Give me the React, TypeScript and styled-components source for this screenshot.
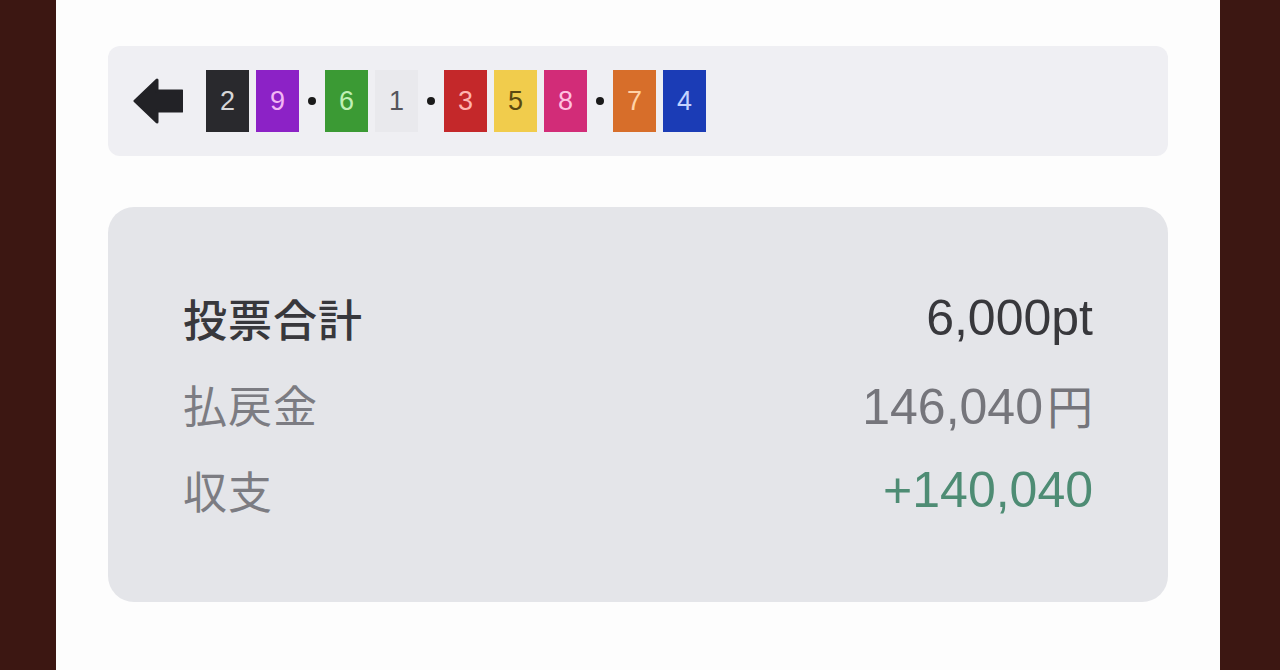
import React from "react";
import styled, { createGlobalStyle } from "styled-components";

const Global = createGlobalStyle`
  html, body { margin: 0; padding: 0; }
  body {
    background: #3c1712;
    font-family: "Liberation Sans", "Noto Sans CJK JP", sans-serif;
    overflow: hidden;
  }
`;

const Frame = styled.div`
  display: flex;
  width: 1280px;
  height: 670px;
  background: #3c1712;
`;

const Panel = styled.main`
  margin-left: 56px;
  width: 1164px;
  height: 670px;
  background: #fdfdfd;
  box-sizing: border-box;
  padding: 46px 52px 0;
  display: flex;
  flex-direction: column;
  overflow: hidden;
`;

const BetBar = styled.div`
  height: 110px;
  background: #efeff3;
  border-radius: 12px;
  display: flex;
  align-items: center;
  padding-left: 25px;
  box-sizing: border-box;
`;

const ArrowWrap = styled.div`
  width: 50px;
  height: 46px;
  margin-right: 23px;
  display: flex;
  align-items: center;
`;

const Numbers = styled.div`
  display: flex;
  align-items: center;
  gap: 7px;
`;

const Box = styled.div<{ $bg: string; $fg: string }>`
  width: 43px;
  height: 62px;
  background: ${(p) => p.$bg};
  color: ${(p) => p.$fg};
  display: flex;
  align-items: center;
  justify-content: center;
  font-family: "Liberation Sans", sans-serif;
  font-size: 27px;
  line-height: 1;
`;

const Dot = styled.span`
  width: 8px;
  height: 8px;
  margin: 0 2px;
  border-radius: 50%;
  background: #1a1a1a;
`;

const Card = styled.section`
  margin-top: 51px;
  height: 395px;
  background: #e4e5e9;
  border-radius: 26px;
  box-sizing: border-box;
  padding: 68px 75px;
  display: flex;
  flex-direction: column;
`;

const Row = styled.div`
  height: 86px;
  display: flex;
  align-items: center;
  justify-content: space-between;
`;

const Label = styled.span<{ $strong?: boolean }>`
  font-family: "Noto Sans CJK JP", sans-serif;
  font-size: 44px;
  font-weight: ${(p) => (p.$strong ? 500 : 400)};
  color: ${(p) => (p.$strong ? "#38383c" : "#7c7c82")};
  letter-spacing: 1px;
`;

const Value = styled.span<{ $color: string }>`
  font-family: "Liberation Sans", "Noto Sans CJK JP", sans-serif;
  font-size: 50px;
  color: ${(p) => p.$color};
`;

const Yen = styled.span`
  font-family: "Noto Sans CJK JP", sans-serif;
  font-size: 46px;
  margin-left: 4px;
`;

type Item = { n: string; bg: string; fg: string } | "dot";

const items: Item[] = [
  { n: "2", bg: "#29292d", fg: "#d6d6d8" },
  { n: "9", bg: "#8c22c6", fg: "#f2b6f4" },
  "dot",
  { n: "6", bg: "#3b9a34", fg: "#bff0b6" },
  { n: "1", bg: "#e9e9ed", fg: "#55555c" },
  "dot",
  { n: "3", bg: "#c4282a", fg: "#ffb4b0" },
  { n: "5", bg: "#f1cc4c", fg: "#5a4810" },
  { n: "8", bg: "#d22c78", fg: "#ffc2e0" },
  "dot",
  { n: "7", bg: "#d76e2a", fg: "#ffd2a6" },
  { n: "4", bg: "#1b3cb6", fg: "#c4d2ff" },
];

const BackArrow = () => (
  <svg width="50" height="46" viewBox="0 0 50 46">
    <path
      d="M2 23 L24 2 L24 13 L49 13 L49 33 L24 33 L24 44 Z"
      fill="#222226"
      stroke="#222226"
      strokeWidth="3"
      strokeLinejoin="round"
    />
  </svg>
);

export default function App() {
  return (
    <>
      <Global />
      <Frame>
        <Panel>
          <BetBar>
            <ArrowWrap>
              <BackArrow />
            </ArrowWrap>
            <Numbers>
              {items.map((it, i) =>
                it === "dot" ? (
                  <Dot key={i} />
                ) : (
                  <Box key={i} $bg={it.bg} $fg={it.fg}>
                    {it.n}
                  </Box>
                )
              )}
            </Numbers>
          </BetBar>
          <Card>
            <Row>
              <Label $strong>投票合計</Label>
              <Value $color="#38383c">6,000pt</Value>
            </Row>
            <Row>
              <Label>払戻金</Label>
              <Value $color="#75757b">
                146,040<Yen>円</Yen>
              </Value>
            </Row>
            <Row>
              <Label>収支</Label>
              <Value $color="#4e8c74">+140,040</Value>
            </Row>
          </Card>
        </Panel>
      </Frame>
    </>
  );
}
